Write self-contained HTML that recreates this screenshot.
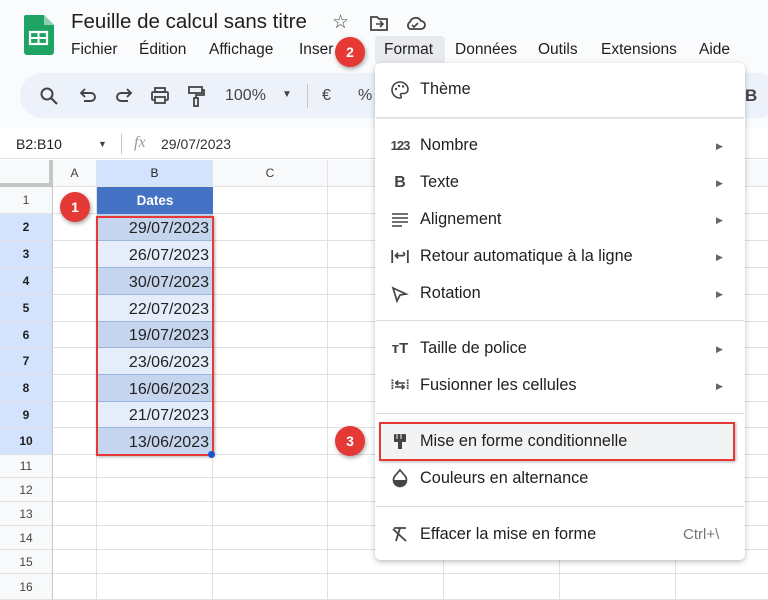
<!DOCTYPE html>
<html><head><style>
*{margin:0;padding:0;box-sizing:border-box}
body{width:768px;height:585px;overflow:hidden;background:#fff;font-family:"Liberation Sans",Arial,sans-serif;position:relative;color:#1f1f1f}
.a{position:absolute}
.hdr{left:0;top:0;width:768px;height:128px;background:#f9fbfd}
.menu span{position:absolute;top:41px;font-size:15.5px;color:#1f1f1f}
.cell{position:absolute;border-right:1px solid #e1e1e1;border-bottom:1px solid #e1e1e1}
.rh{position:absolute;left:0;width:53px;text-align:center;font-size:12px;color:#444;border-bottom:1px solid #e1e1e1;border-right:1px solid #c4c7c5}
.dt{position:absolute;left:97px;width:116px;text-align:right;padding-right:4px;font-size:16px;color:#222;border-bottom:1px solid #9bb4de}
.badge{position:absolute;width:30px;height:30px;border-radius:50%;background:#e53935;color:#fff;font-weight:bold;font-size:14px;text-align:center;line-height:30px;box-shadow:1px 2px 4px rgba(0,0,0,.35)}
.mi{position:absolute;left:420px;font-size:16.3px;color:#1f1f1f}
.ar{position:absolute;left:716px;font-size:9px;color:#666}
.ic{position:absolute;left:390px;font-size:14px;color:#444;width:20px;text-align:center}
.sep{position:absolute;left:376px;width:368px;height:1px;background:#dadce0}
</style></head><body>
<div class="a hdr"></div>
<svg class="a" style="left:24px;top:15px" width="30" height="40" viewBox="0 0 30 40"><path d="M2 0h18l10 10v27a3 3 0 0 1-3 3H3a3 3 0 0 1-3-3V2a2 2 0 0 1 2-2z" fill="#1ea362"/><path d="M20 0v10h10z" fill="#8ed1b1"/><rect x="6" y="17" width="17" height="12" fill="none" stroke="#fff" stroke-width="2.2"/><path d="M6 23h17M14.5 17v12" stroke="#fff" stroke-width="2"/></svg>
<div class="a" style="left:71px;top:10px;font-size:20.5px;color:#1f1f1f">Feuille de calcul sans titre</div>
<div class="a" style="left:332px;top:11px;font-size:19px;color:#444">☆</div>
<svg class="a" style="left:369px;top:14px" width="20" height="18"><path d="M2 3h6l2 2h8v11H2z" fill="none" stroke="#444" stroke-width="1.8"/><path d="M7 10h6M11 7l3 3-3 3" fill="none" stroke="#444" stroke-width="1.6"/></svg>
<svg class="a" style="left:404px;top:14px" width="22" height="18"><path d="M6 15h11a4 4 0 0 0 0-8 6 6 0 0 0-11 1 4 4 0 0 0 0 7z" fill="none" stroke="#444" stroke-width="1.8"/><path d="M8 11l2 2 4-4" fill="none" stroke="#444" stroke-width="1.6"/></svg>
<div class="menu"><span style="left:71px">Fichier</span><span style="left:139px">Édition</span><span style="left:209px">Affichage</span><span style="left:299px">Inser</span><div class="a" style="left:375px;top:36px;width:70px;height:28px;background:#e8eaed;border-radius:4px"></div><span style="left:384px">Format</span><span style="left:455px">Données</span><span style="left:538px">Outils</span><span style="left:601px">Extensions</span><span style="left:699px">Aide</span></div>
<div class="a" style="left:20px;top:73px;width:760px;height:45px;background:#edf2fa;border-radius:23px"></div>
<svg class="a" style="left:39px;top:86px" width="20" height="20"><circle cx="8" cy="8" r="5.5" fill="none" stroke="#444" stroke-width="2"/><path d="M12 12l6 6" stroke="#444" stroke-width="2.2"/></svg>
<svg class="a" style="left:78px;top:87px" width="20" height="18"><path d="M4 6h9a4 4 0 0 1 0 8H6" fill="none" stroke="#444" stroke-width="1.9"/><path d="M7 2L3 6l4 4" fill="none" stroke="#444" stroke-width="1.9"/></svg>
<svg class="a" style="left:114px;top:87px" width="20" height="18"><path d="M16 6H7a4 4 0 0 0 0 8h7" fill="none" stroke="#444" stroke-width="1.9"/><path d="M13 2l4 4-4 4" fill="none" stroke="#444" stroke-width="1.9"/></svg>
<svg class="a" style="left:150px;top:86px" width="20" height="20"><rect x="5" y="2" width="10" height="4" fill="none" stroke="#444" stroke-width="1.8"/><rect x="2" y="6" width="16" height="8" rx="1" fill="none" stroke="#444" stroke-width="1.8"/><rect x="5" y="11" width="10" height="6" fill="#edf2fa" stroke="#444" stroke-width="1.8"/></svg>
<svg class="a" style="left:187px;top:86px" width="18" height="22"><rect x="2" y="1" width="13" height="6" fill="none" stroke="#444" stroke-width="1.8"/><path d="M15 4h2v5H9v3" fill="none" stroke="#444" stroke-width="1.8"/><rect x="7" y="12" width="4" height="8" fill="none" stroke="#444" stroke-width="1.8"/></svg>
<div class="a" style="left:225px;top:87px;font-size:16px;color:#444">100%</div>
<div class="a" style="left:282px;top:89px;font-size:10px;color:#444">▼</div>
<div class="a" style="left:307px;top:84px;width:1px;height:24px;background:#c4c7c5"></div>
<div class="a" style="left:322px;top:87px;font-size:16px;color:#444">€</div>
<div class="a" style="left:358px;top:87px;font-size:16px;color:#444">%</div>
<div class="a" style="left:745px;top:86px;font-size:17px;font-weight:bold;color:#444">B</div>
<div class="a" style="left:0;top:128px;width:768px;height:31px;border-bottom:1px solid #e1e1e1;background:#fff"></div>
<div class="a" style="left:16px;top:136px;font-size:14px;color:#1f1f1f">B2:B10</div>
<div class="a" style="left:98px;top:139px;font-size:9px;color:#444">▼</div>
<div class="a" style="left:121px;top:134px;width:1px;height:20px;background:#c4c7c5"></div>
<div class="a" style="left:134px;top:134px;font-size:16px;font-style:italic;color:#999;font-family:'Liberation Serif',serif">fx</div>
<div class="a" style="left:161px;top:136px;font-size:14px;color:#333">29/07/2023</div>
<div class="a" style="left:0;top:160px;width:768px;height:27px;background:#f8f9fa;border-bottom:1px solid #c4c7c5"></div>
<div class="a" style="left:0;top:160px;width:53px;height:27px;border-right:4px solid #c4c7c5;border-bottom:4px solid #c4c7c5;background:#f8f9fa"></div>
<div class="cell" style="left:53px;top:160px;width:44px;height:27px;text-align:center;font-size:12px;color:#444;line-height:27px">A</div>
<div class="cell" style="left:97px;top:160px;width:116px;height:27px;text-align:center;font-size:12px;color:#1f1f1f;line-height:27px;background:#d3e3fd">B</div>
<div class="cell" style="left:213px;top:160px;width:115px;height:27px;text-align:center;font-size:12px;color:#444;line-height:27px">C</div>
<div class="cell" style="left:328px;top:160px;width:116px;height:27px"></div>
<div class="cell" style="left:444px;top:160px;width:116px;height:27px"></div>
<div class="cell" style="left:560px;top:160px;width:116px;height:27px"></div>
<div class="cell" style="left:676px;top:160px;width:116px;height:27px"></div>
<div id="rows"></div>
<div class="a" style="left:97px;top:187px;width:116px;height:27px;background:#4472c4;color:#fff;font-weight:bold;font-size:13.5px;text-align:center;line-height:27px">Dates</div>
<script>
var tops=[187,214,241,268,295,322,348,375,402,428,455,478,502,526,550,574,600];
var d=["29/07/2023","26/07/2023","30/07/2023","22/07/2023","19/07/2023","23/06/2023","16/06/2023","21/07/2023","13/06/2023"];
var cols=[[53,44],[97,116],[213,115],[328,116],[444,116],[560,116],[676,116]];
var h="";
for(var i=0;i<16;i++){var t=tops[i],ht=tops[i+1]-t,sel=i>=1&&i<=9;
h+='<div class="rh" style="top:'+t+'px;height:'+ht+'px;line-height:'+ht+'px;'+(sel?'background:#d3e3fd;font-weight:bold;color:#1f1f1f':'background:#f8f9fa')+'">'+(i+1)+'</div>';
for(var c=0;c<cols.length;c++)h+='<div class="cell" style="left:'+cols[c][0]+'px;top:'+t+'px;width:'+cols[c][1]+'px;height:'+ht+'px"></div>';
if(sel)h+='<div class="dt" style="top:'+t+'px;height:'+ht+'px;line-height:'+(ht+2)+'px;background:'+(i%2?'#c6d5ee':'#e5edfb')+'">'+d[i-1]+'</div>';}
document.getElementById("rows").innerHTML=h;
</script>
<div class="a" style="left:96px;top:216px;width:118px;height:240px;border:2.5px solid #e53935;box-shadow:1px 1px 3px rgba(0,0,0,.3)"></div>
<div class="a" style="left:208px;top:451px;width:7px;height:7px;border-radius:50%;background:#1a56c9"></div>
<div class="a" style="left:375px;top:63px;width:370px;height:497px;background:#fff;border-radius:6px;box-shadow:0 2px 6px rgba(0,0,0,.25)"></div>
<div class="sep" style="top:117px;height:2px;background:#e3e3e3"></div>
<div class="sep" style="top:320px"></div>
<div class="sep" style="top:413px"></div>
<div class="sep" style="top:506px"></div>
<div class="a" style="left:379px;top:422px;width:356px;height:39px;background:#f1f3f4;border:2.5px solid #e53935;box-shadow:1px 1px 3px rgba(0,0,0,.3)"></div>
<svg class="a" style="left:390px;top:80px" width="20" height="20"><path d="M10 2a8 8 0 0 0 0 16c1.5 0 1.5-1.5.8-2.3-.8-.9-.2-2.2 1-2.2H14a4 4 0 0 0 4-4c0-4-3.6-7.5-8-7.5z" fill="none" stroke="#444" stroke-width="1.6"/><circle cx="6" cy="9" r="1.2" fill="#444"/><circle cx="9" cy="6" r="1.2" fill="#444"/><circle cx="13" cy="6.5" r="1.2" fill="#444"/></svg>
<div class="mi" style="top:80px">Thème</div>
<div class="ic" style="top:138px;font-weight:bold;font-size:13px;letter-spacing:-1px">123</div><div class="mi" style="top:136px">Nombre</div><div class="ar" style="top:141px">▶</div>
<div class="ic" style="top:174px;font-weight:bold;font-size:16px">B</div><div class="mi" style="top:173px">Texte</div><div class="ar" style="top:178px">▶</div>
<svg class="a" style="left:391px;top:212px" width="18" height="16"><path d="M1 2h16M1 6h16M1 10h16M1 14h10" stroke="#444" stroke-width="1.6"/></svg>
<div class="mi" style="top:210px">Alignement</div><div class="ar" style="top:215px">▶</div>
<div class="ic" style="top:247px;font-size:14px;font-weight:bold">|↩|</div><div class="mi" style="top:247px">Retour automatique à la ligne</div><div class="ar" style="top:252px">▶</div>
<svg class="a" style="left:391px;top:285px" width="18" height="18"><path d="M2 3l13 6-6 1-3 6z" fill="none" stroke="#444" stroke-width="1.7"/></svg>
<div class="mi" style="top:284px">Rotation</div><div class="ar" style="top:289px">▶</div>
<div class="ic" style="top:340px;font-weight:bold;font-size:15px">ᴛT</div><div class="mi" style="top:339px">Taille de police</div><div class="ar" style="top:344px">▶</div>
<div class="ic" style="top:377px;font-weight:bold;font-size:13px">⁞⇆⁞</div><div class="mi" style="top:376px">Fusionner les cellules</div><div class="ar" style="top:381px">▶</div>
<svg class="a" style="left:392px;top:432px" width="16" height="20"><rect x="2" y="2" width="12" height="8" rx="1" fill="#444"/><rect x="6" y="10" width="4" height="7" fill="#444"/><path d="M5 2v5M9 2v5" stroke="#f1f3f4" stroke-width="1"/></svg>
<div class="mi" style="top:432px">Mise en forme conditionnelle</div>
<svg class="a" style="left:391px;top:468px" width="18" height="20"><path d="M9 2l5.5 6.5a6.5 6.5 0 1 1-11 0z" fill="none" stroke="#444" stroke-width="1.7"/><path d="M2.5 12h13a6.5 6.5 0 0 1-13 0z" fill="#444"/></svg>
<div class="mi" style="top:469px">Couleurs en alternance</div>
<svg class="a" style="left:391px;top:525px" width="18" height="18"><path d="M3 3h12M9 3l-4 13M2 4l13 12" stroke="#444" stroke-width="1.8" fill="none"/></svg>
<div class="mi" style="top:525px">Effacer la mise en forme</div>
<div class="a" style="left:683px;top:526px;font-size:15px;color:#777">Ctrl+\</div>
<div class="badge" style="left:60px;top:192px">1</div>
<div class="badge" style="left:335px;top:37px">2</div>
<div class="badge" style="left:335px;top:426px">3</div>
</body></html>
